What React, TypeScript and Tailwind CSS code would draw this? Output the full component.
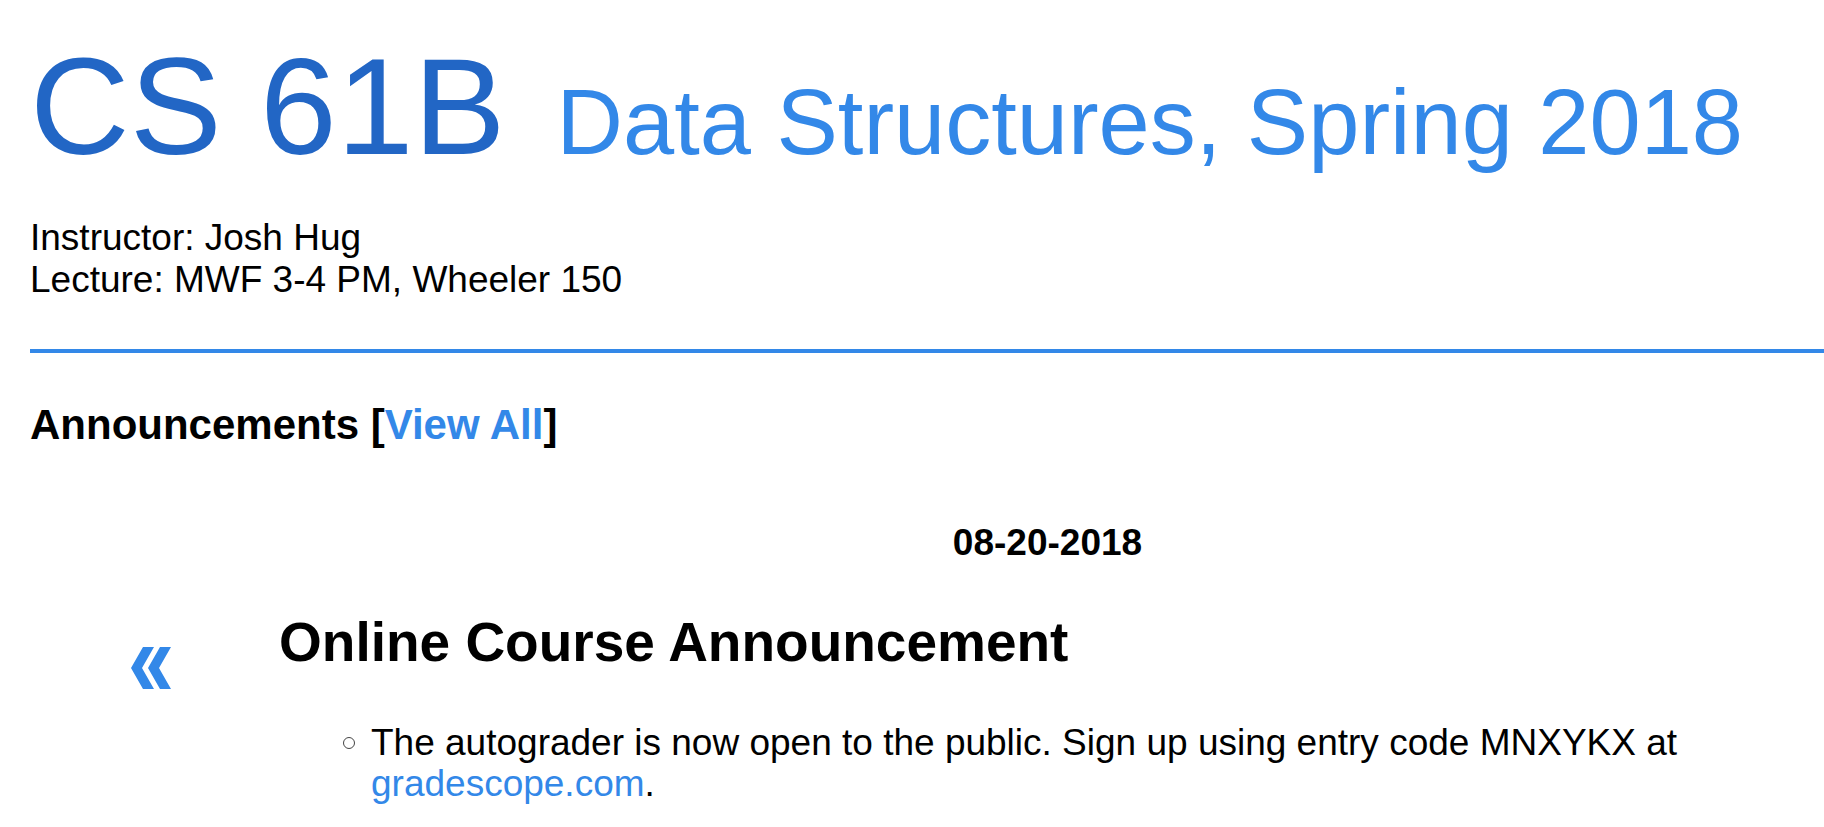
import React from "react"

function DoubleLeft() {
  return (
    <svg width="40" height="42" viewBox="0 0 40 42" className="block">
      <polygon points="0,21 12,0 23,0 11,21 23,42 12,42" fill="#3388e8" />
      <polygon points="17,21 29,0 40,0 28,21 40,42 29,42" fill="#3388e8" />
    </svg>
  )
}

export default function App() {
  return (
    <div className="min-h-screen bg-white pl-[30px] text-black font-['Liberation_Sans',Arial,sans-serif]">
      {/* Title */}
      <div className="flex items-baseline pt-[37px]">
        <span className="text-[138px] leading-none text-[#2266c5]">CS 61B</span>
        <span className="ml-[51px] text-[92px] leading-none text-[#3388e8]">Data Structures, Spring 2018</span>
      </div>

      <div className="mt-[42px] text-[37px] leading-[42px]">
        <div>Instructor: Josh Hug</div>
        <div>Lecture: MWF 3-4 PM, Wheeler 150</div>
      </div>

      <div className="mt-[48px] h-[4px] bg-[#3388e8]" />

      {/* Announcements */}
      <h3 className="mt-[51px] text-[42px] font-bold leading-none">
        Announcements [<a className="text-[#3388e8]">View All</a>]
      </h3>

      <div className="mt-[78px] flex">
        <div className="w-[249px] shrink-0 pl-[101px] pt-[123px]">
          <DoubleLeft />
        </div>
        <div className="flex-1 pr-[8px]">
          <div className="text-center text-[37px] font-bold leading-none">08-20-2018</div>
          <h2 className="mt-[54px] text-[55px] font-bold leading-none">Online Course Announcement</h2>
          <ul className="mt-[52px] pl-[64px]">
            <li className="flex text-[37px] leading-[41px]">
              <span className="mt-[15px] mr-[16px] h-[12px] w-[12px] shrink-0 rounded-full border-[1.5px] border-[#444]" />
              <span>
                The autograder is now open to the public. Sign up using entry code MNXYKX at{" "}
                <a className="text-[#3388e8]">gradescope.com</a>.
              </span>
            </li>
          </ul>
        </div>
      </div>
    </div>
  )
}
